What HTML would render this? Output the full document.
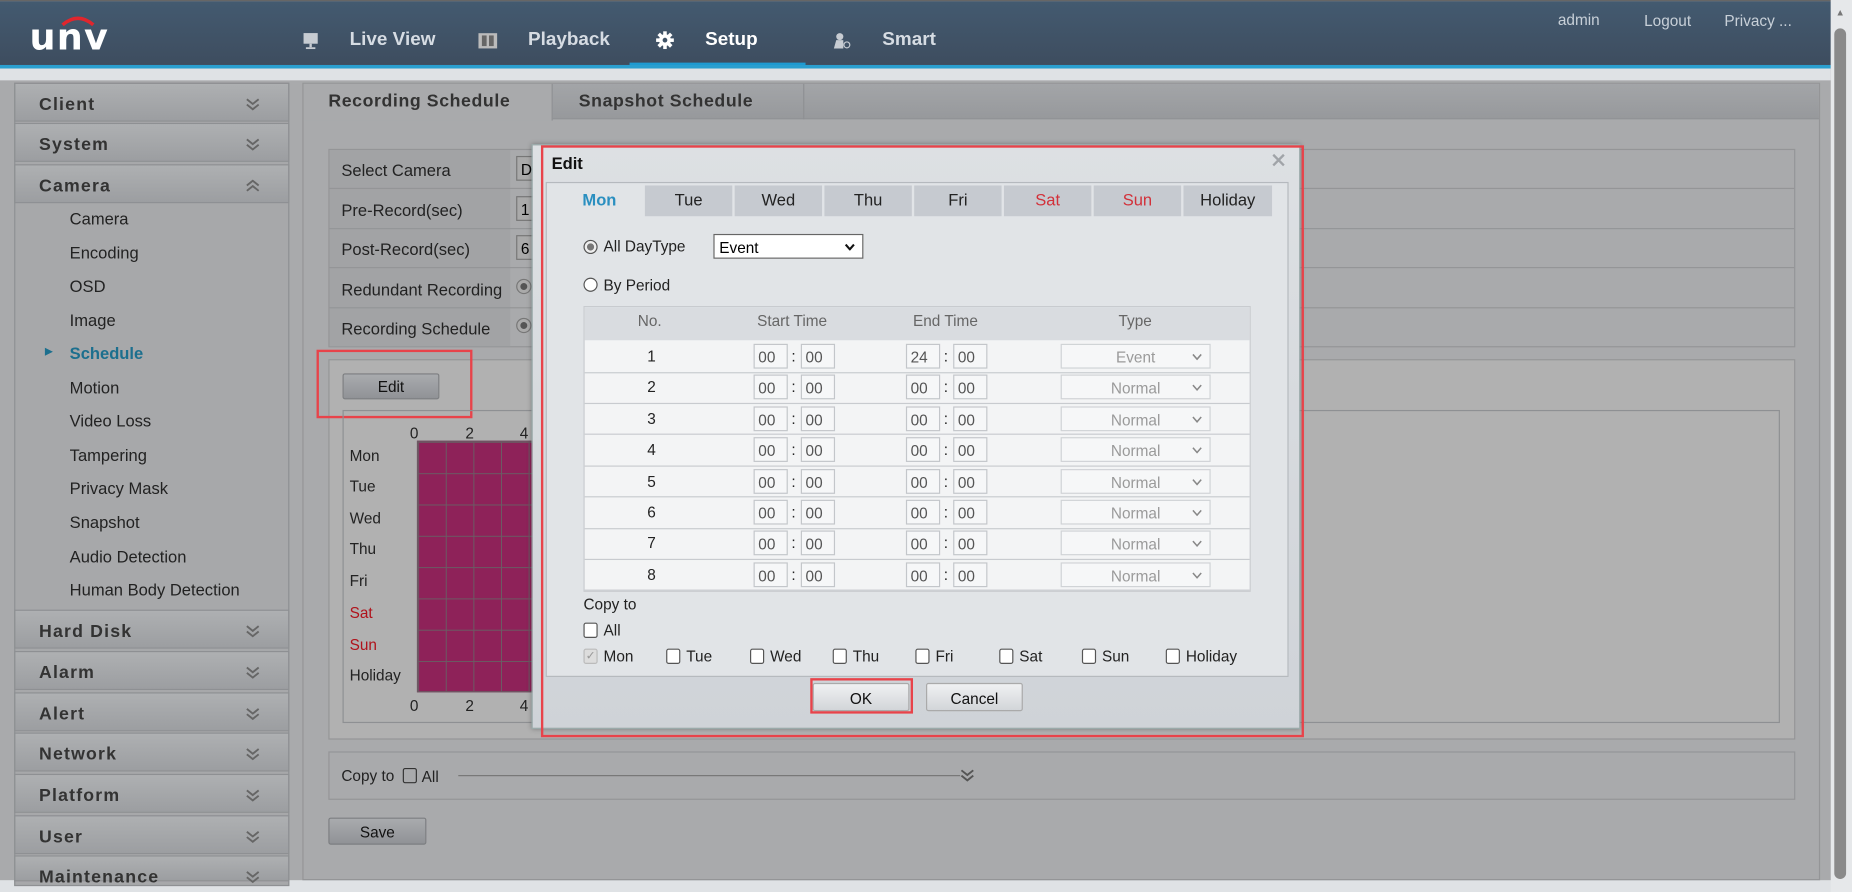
<!DOCTYPE html>
<html><head><meta charset="utf-8"><style>
*{box-sizing:border-box;margin:0;padding:0}
html,body{width:1852px;height:892px;overflow:hidden;background:#a9aaac;font-family:"Liberation Sans",sans-serif}
#w{position:absolute;left:0;top:0;width:1568px;height:755px;transform:scale(1.18112,1.18146);transform-origin:0 0;background:#a9aaac}
.a{position:absolute}
.hdr{left:0;top:0;width:1550px;height:55px;background:linear-gradient(#435a70,#3e4d5f);border-top:1px solid #666}
.nav{color:#d6dce3;font-size:16px;font-weight:bold;top:25px}
.sh{left:12px;width:233px;height:33px;background:linear-gradient(#aeb0b2,#9c9ea1);border:1px solid #8e9093;color:#333;font-weight:bold;font-size:15px;letter-spacing:1px;padding:9px 0 0 20px}
.sh svg{position:absolute;right:24px;top:12px}
.si{left:59px;font-size:14px;color:#222}
.lbl{font-size:14px;color:#222}
.box{border:1px solid #949597}
.btn{background:linear-gradient(#a9abae,#909296);border:1px solid #7c7e81;border-radius:2px;font-size:13px;text-align:center;color:#111}
.dt{top:157px;height:26px;background:#c6cad0;font-size:14px;text-align:center;padding-top:4px;color:#222}
.inp{width:29px;height:21px;background:#f6f7f8;border:1px solid #c3c6ca;font-size:13px;color:#555;padding:3px 0 0 3px}
.sel{width:127px;height:21px;background:#f6f7f8;border:1px solid #d0d3d6;font-size:13px;color:#9a9a9a;text-align:center;padding-top:3px}
.sel svg{position:absolute;right:6px;top:7px}
.cb{width:12px;height:13px;border:1px solid #555;border-radius:2px;background:#fff}
.ct{font-size:13px;color:#222}
</style></head><body><div id="w">
<!-- header -->
<div class="a hdr"></div>
<div class="a" style="left:25px;top:14px;font-size:31px;color:#fff;font-weight:bold;letter-spacing:1px;font-family:'DejaVu Sans',sans-serif">unv</div>
<svg class="a" style="left:51px;top:12px" width="30" height="10"><path d="M2 9 Q15 -2 28 9" stroke="#e0262d" stroke-width="3" fill="none"/></svg>
<svg class="a" style="left:256px;top:27px" width="14" height="16"><rect x="1" y="1" width="12" height="9" fill="#c7ccd2"/><rect x="6" y="10" width="2" height="3" fill="#c7ccd2"/><rect x="3" y="13" width="8" height="1.5" fill="#c7ccd2"/></svg>
<div class="a nav" style="left:296px">Live View</div>
<svg class="a" style="left:405px;top:28px" width="16" height="13"><rect x="0" y="0" width="16" height="13" fill="#bbb"/><rect x="3" y="2" width="4" height="9" fill="#666"/><rect x="9" y="2" width="4" height="9" fill="#666"/></svg>
<div class="a nav" style="left:447px">Playback</div>
<svg class="a" style="left:555px;top:26px" width="16" height="16" viewBox="0 0 16 16"><g fill="#fff"><circle cx="8" cy="8" r="5"/><rect x="6.5" y="0.5" width="3" height="15"/><rect x="0.5" y="6.5" width="15" height="3"/><rect x="6.5" y="0.5" width="3" height="15" transform="rotate(45 8 8)"/><rect x="6.5" y="0.5" width="3" height="15" transform="rotate(-45 8 8)"/></g><circle cx="8" cy="8" r="2" fill="#3f5266"/></svg>
<div class="a nav" style="left:597px;color:#fff">Setup</div>
<div class="a" style="left:533px;top:53px;width:149px;height:3px;background:#1e9bd1"></div>
<svg class="a" style="left:705px;top:27px" width="16" height="15"><circle cx="6" cy="4" r="3" fill="#c7ccd2"/><path d="M1 14 L3 7 L9 7 L9 14Z" fill="#c7ccd2"/><circle cx="12" cy="11" r="2.5" stroke="#c7ccd2" fill="none"/></svg>
<div class="a nav" style="left:747px">Smart</div>
<div class="a" style="left:1319px;top:9px;color:#c8d0d8;font-size:13px">admin</div>
<div class="a" style="left:1392px;top:10px;color:#c8d0d8;font-size:13px">Logout</div>
<div class="a" style="left:1460px;top:10px;color:#c8d0d8;font-size:13px">Privacy ...</div>
<div class="a" style="left:0;top:55px;width:1550px;height:3px;background:#2a9fcf"></div>
<div class="a" style="left:0;top:58px;width:1550px;height:10px;background:#dfe2e5"></div>
<div class="a" style="left:0;top:745px;width:1568px;height:10px;background:#dfe2e5"></div>
<!-- scrollbar -->
<div class="a" style="left:1550px;top:0;width:18px;height:755px;background:#e6e8ea"></div>
<div class="a" style="left:1554px;top:6px;color:#777;font-size:8px">▲</div>
<div class="a" style="left:1553px;top:24px;width:10px;height:720px;background:#8a8a8a;border-radius:5px"></div>
<!-- sidebar -->
<div class="a" style="left:12px;top:70px;width:233px;height:680px;background:#a7a8aa;border:1px solid #8e9093"></div>
<div id="sb"></div>
<div class="a si" style="top:177px">Camera</div>
<div class="a si" style="top:206px">Encoding</div>
<div class="a si" style="top:234px">OSD</div>
<div class="a si" style="top:263px">Image</div>
<div class="a" style="left:38px;top:292px;color:#1c6f8e;font-size:9px">▶</div>
<div class="a si" style="top:291px;color:#1c6f8e;font-weight:bold">Schedule</div>
<div class="a si" style="top:320px">Motion</div>
<div class="a si" style="top:348px">Video Loss</div>
<div class="a si" style="top:377px">Tampering</div>
<div class="a si" style="top:405px">Privacy Mask</div>
<div class="a si" style="top:434px">Snapshot</div>
<div class="a si" style="top:463px">Audio Detection</div>
<div class="a si" style="top:491px">Human Body Detection</div>
<!-- main -->
<div class="a box" style="left:256px;top:70px;width:1285px;height:675px;background:#a9aaac"></div>
<div class="a" style="left:257px;top:71px;width:1283px;height:30px;background:linear-gradient(#a3a5a8,#97999c);border-bottom:1px solid #8e9093"></div>
<div class="a" style="left:257px;top:71px;width:211px;height:31px;background:#a9aaac;border-right:1px solid #8e9093;font-weight:bold;font-size:15px;color:#333;padding:6px 0 0 21px;letter-spacing:.5px">Recording Schedule</div>
<div class="a" style="left:468px;top:71px;width:213px;height:30px;border-right:1px solid #8e9093;font-weight:bold;font-size:15px;color:#333;padding:6px 0 0 22px;letter-spacing:.5px">Snapshot Schedule</div>
<!-- form -->
<div class="a box" style="left:278px;top:126px;width:1242px;height:168px"></div>
<div class="a" style="left:279px;top:127px;width:153px;height:166px;background:#a2a3a5"></div>
<div class="a" style="left:279px;top:159px;width:1240px;height:1px;background:#949597"></div>
<div class="a" style="left:279px;top:193px;width:1240px;height:1px;background:#949597"></div>
<div class="a" style="left:279px;top:226px;width:1240px;height:1px;background:#949597"></div>
<div class="a" style="left:279px;top:260px;width:1240px;height:1px;background:#949597"></div>
<div class="a lbl" style="left:289px;top:136px">Select Camera</div>
<div class="a lbl" style="left:289px;top:170px">Pre-Record(sec)</div>
<div class="a lbl" style="left:289px;top:203px">Post-Record(sec)</div>
<div class="a lbl" style="left:289px;top:237px">Redundant Recording</div>
<div class="a lbl" style="left:289px;top:270px">Recording Schedule</div>
<div class="a" style="left:437px;top:132px;width:20px;height:21px;border:1px solid #777;background:#aaa;font-size:13px;padding:3px">D</div>
<div class="a" style="left:437px;top:166px;width:20px;height:21px;border:1px solid #777;background:#aaa;font-size:13px;padding:3px">1</div>
<div class="a" style="left:437px;top:199px;width:20px;height:21px;border:1px solid #777;background:#aaa;font-size:13px;padding:3px">6</div>
<div class="a" style="left:437px;top:236px;width:13px;height:13px;border:1px solid #777;border-radius:50%;background:radial-gradient(#555 35%,#aaa 40%)"></div>
<div class="a" style="left:437px;top:269px;width:13px;height:13px;border:1px solid #777;border-radius:50%;background:radial-gradient(#555 35%,#aaa 40%)"></div>
<!-- schedule section -->
<div class="a box" style="left:278px;top:304px;width:1242px;height:322px;background:#b1b1b1"></div>
<div class="a btn" style="left:290px;top:316px;width:82px;height:22px;padding-top:3px">Edit</div>
<div class="a" style="left:268px;top:296px;width:132px;height:58px;border:2px solid #e8434a"></div>
<div class="a" style="left:290px;top:347px;width:1217px;height:265px;border:1px solid #8e9093"></div>
<div class="a ct" style="left:347px;top:359px">0</div><div class="a ct" style="left:394px;top:359px">2</div><div class="a ct" style="left:440px;top:359px">4</div>
<div class="a ct" style="left:347px;top:590px">0</div><div class="a ct" style="left:394px;top:590px">2</div><div class="a ct" style="left:440px;top:590px">4</div>
<div class="a ct" style="left:296px;top:378px">Mon</div>
<div class="a ct" style="left:296px;top:404px">Tue</div>
<div class="a ct" style="left:296px;top:431px">Wed</div>
<div class="a ct" style="left:296px;top:457px">Thu</div>
<div class="a ct" style="left:296px;top:484px">Fri</div>
<div class="a ct" style="left:296px;top:511px;color:#b0121b">Sat</div>
<div class="a ct" style="left:296px;top:538px;color:#b0121b">Sun</div>
<div class="a ct" style="left:296px;top:564px">Holiday</div>
<div class="a" style="left:353px;top:373px;width:100px;height:213px;background-color:#8e2259;background-image:linear-gradient(90deg,#6b5a63 1px,transparent 1px),linear-gradient(#6b5a63 1px,transparent 1px);background-size:23.4px 26.5px;border:1px solid #6b5a63"></div>
<!-- copy to -->
<div class="a box" style="left:278px;top:636px;width:1242px;height:41px"></div>
<div class="a ct" style="left:289px;top:649px">Copy to</div>
<div class="a cb" style="left:341px;top:650px;background:transparent;border-color:#333"></div>
<div class="a ct" style="left:357px;top:650px">All</div>
<div class="a" style="left:388px;top:656px;width:425px;height:1px;background:#777"></div>
<svg class="a" style="left:813px;top:651px" width="12" height="11"><path d="M1 1 L6 5 L11 1 M1 5.5 L6 9.5 L11 5.5" stroke="#555" stroke-width="1.6" fill="none"/></svg>
<div class="a btn" style="left:278px;top:692px;width:83px;height:23px;padding-top:4px">Save</div>
<!-- dialog -->
<div class="a" style="left:450px;top:122px;width:651px;height:495px;background:linear-gradient(#dde0e3,#cfd3d8);border:1px solid #9aa;box-shadow:0 0 4px rgba(0,0,0,.3)"></div>
<div class="a" style="left:467px;top:130px;font-weight:bold;font-size:14px;color:#111">Edit</div>
<svg class="a" style="left:1077px;top:130px" width="11" height="11"><path d="M1 1 L10 10 M10 1 L1 10" stroke="#a0a4a8" stroke-width="2"/></svg>
<div class="a" style="left:462px;top:154px;width:629px;height:419px;background:#e1e4e7;border:1px solid #b5b9be"></div>
<div class="a" style="left:470px;top:157px;width:75px;height:26px;font-size:14px;text-align:center;padding-top:4px;color:#2a8fc0;font-weight:bold">Mon</div>
<div class="a dt" style="left:546px;width:74px">Tue</div>
<div class="a dt" style="left:622px;width:74px">Wed</div>
<div class="a dt" style="left:698px;width:74px">Thu</div>
<div class="a dt" style="left:774px;width:74px">Fri</div>
<div class="a dt" style="left:850px;width:74px;color:#d2313a">Sat</div>
<div class="a dt" style="left:926px;width:74px;color:#d2313a">Sun</div>
<div class="a dt" style="left:1002px;width:75px">Holiday</div>
<div class="a" style="left:494px;top:203px;width:12px;height:12px;border:1px solid #555;border-radius:50%;background:radial-gradient(#777 40%,#eee 45%)"></div>
<div class="a ct" style="left:511px;top:201px">All DayType</div>
<div class="a" style="left:604px;top:198px;width:127px;height:21px;border:1px solid #666;background:#fff;font-size:13px;padding:3px 0 0 4px">Event<svg style="position:absolute;right:6px;top:7px" width="9" height="6"><path d="M1 1 L4.5 5 L8 1" stroke="#111" stroke-width="1.8" fill="none"/></svg></div>
<div class="a" style="left:494px;top:235px;width:12px;height:12px;border:1px solid #555;border-radius:50%;background:#fff"></div>
<div class="a ct" style="left:511px;top:234px">By Period</div>
<div class="a" style="left:494px;top:259px;width:565px;height:242px;border:1px solid #c8cbcf;background:#f3f4f5"></div>
<div class="a" style="left:495px;top:260px;width:563px;height:28px;background:#d9dce0"></div>
<div class="a ct" style="left:540px;top:264px;color:#666">No.</div>
<div class="a ct" style="left:641px;top:264px;color:#666">Start Time</div>
<div class="a ct" style="left:773px;top:264px;color:#666">End Time</div>
<div class="a ct" style="left:947px;top:264px;color:#666">Type</div>
<div id="rows"></div>
<div class="a ct" style="left:494px;top:504px">Copy to</div>
<div class="a cb" style="left:494px;top:527px"></div><div class="a ct" style="left:511px;top:526px">All</div>
<div class="a cb" style="left:494px;top:549px;background:#ddd;border-color:#bbb;color:#999;font-size:10px;line-height:11px;text-align:center">✓</div><div class="a ct" style="left:511px;top:548px">Mon</div>
<div class="a cb" style="left:564px;top:549px"></div><div class="a ct" style="left:581px;top:548px">Tue</div>
<div class="a cb" style="left:635px;top:549px"></div><div class="a ct" style="left:652px;top:548px">Wed</div>
<div class="a cb" style="left:705px;top:549px"></div><div class="a ct" style="left:722px;top:548px">Thu</div>
<div class="a cb" style="left:775px;top:549px"></div><div class="a ct" style="left:792px;top:548px">Fri</div>
<div class="a cb" style="left:846px;top:549px"></div><div class="a ct" style="left:863px;top:548px">Sat</div>
<div class="a cb" style="left:916px;top:549px"></div><div class="a ct" style="left:933px;top:548px">Sun</div>
<div class="a cb" style="left:987px;top:549px"></div><div class="a ct" style="left:1004px;top:548px">Holiday</div>
<div class="a btn" style="left:688px;top:578px;width:82px;height:24px;padding-top:5px;background:linear-gradient(#f0f1f2,#d2d5d9);border-color:#aaa">OK</div>
<div class="a btn" style="left:784px;top:578px;width:82px;height:24px;padding-top:5px;background:linear-gradient(#f0f1f2,#d2d5d9);border-color:#aaa">Cancel</div>
<div class="a" style="left:686px;top:574px;width:87px;height:30px;border:2px solid #e8434a"></div>
<div class="a" style="left:458px;top:123px;width:646px;height:501px;border:2px solid #e8434a"></div>
<script>
var dn='<svg width="12" height="11"><path d="M1 1 L6 5 L11 1 M1 5.5 L6 9.5 L11 5.5" stroke="#666" stroke-width="1.6" fill="none"/></svg>';
var up='<svg width="12" height="11"><path d="M1 5 L6 1 L11 5 M1 9.5 L6 5.5 L11 9.5" stroke="#666" stroke-width="1.6" fill="none"/></svg>';
var hs=[['Client',70,dn],['System',104,dn],['Camera',139,up],['Hard Disk',516,dn],['Alarm',551,dn],['Alert',586,dn],['Network',620,dn],['Platform',655,dn],['User',690,dn],['Maintenance',724,dn]];
var s='';hs.forEach(function(x){s+='<div class="a sh" style="top:'+x[1]+'px'+(x[0]=='Maintenance'?';height:22px':'')+'">'+x[0]+x[2]+'</div>';});
document.getElementById('sb').outerHTML=s;
var ch='<svg width="9" height="6"><path d="M1 1 L4.5 5 L8 1" stroke="#888" stroke-width="1.3" fill="none"/></svg>';
var h='',ends=['24','00','00','00','00','00','00','00'];
for(var i=0;i<8;i++){var y=289+i*26.4;
h+='<div class="a" style="left:495px;top:'+(y+25.5)+'px;width:563px;height:1px;background:#c8cbcf"></div>';
h+='<div class="a ct" style="left:548px;top:'+(y+5)+'px">'+(i+1)+'</div>';
h+='<div class="a inp" style="left:638px;top:'+(y+2)+'px">00</div><div class="a ct" style="left:670px;top:'+(y+5)+'px">:</div><div class="a inp" style="left:678px;top:'+(y+2)+'px">00</div>';
h+='<div class="a inp" style="left:767px;top:'+(y+2)+'px">'+ends[i]+'</div><div class="a ct" style="left:799px;top:'+(y+5)+'px">:</div><div class="a inp" style="left:807px;top:'+(y+2)+'px">00</div>';
h+='<div class="a sel" style="left:898px;top:'+(y+2)+'px">'+(i==0?'Event':'Normal')+ch+'</div>';}
document.getElementById('rows').outerHTML=h;
</script>
</div></body></html>
